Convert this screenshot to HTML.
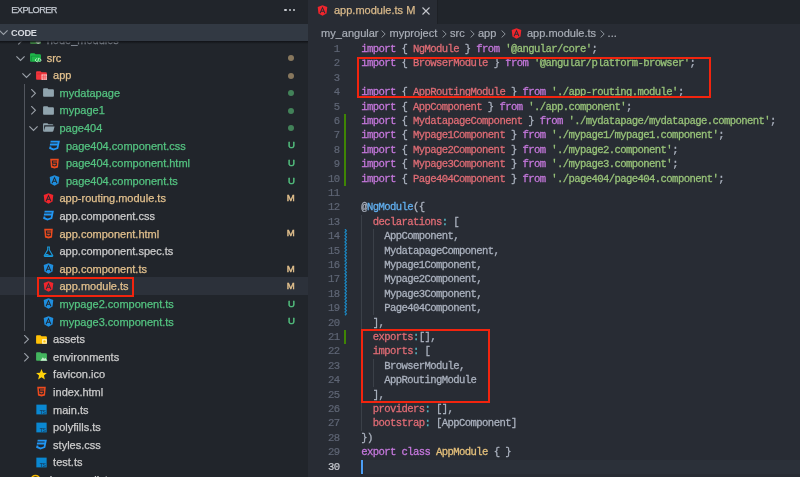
<!DOCTYPE html>
<html><head><meta charset="utf-8"><style>
*{margin:0;padding:0;box-sizing:border-box}
html,body{width:800px;height:477px;overflow:hidden;background:#282c34;font-family:"Liberation Sans",sans-serif}
.ic{position:absolute;display:block}
#sb{position:absolute;left:0;top:0;width:308px;height:477px;background:#21252b;overflow:hidden}
#sbtitle{position:absolute;left:11.3px;top:-1.8px;height:24px;line-height:24px;font-size:9.2px;letter-spacing:-0.55px;color:#c3c8d0;-webkit-text-stroke:0.25px #c3c8d0}
.dots{position:absolute;top:9.3px;width:2.2px;height:2.2px;border-radius:50%;background:#c9ccd2}
#list{position:absolute;left:0;top:41.4px;width:308px;height:440px;overflow:hidden}
#list .inner{position:absolute;left:0;top:-41.4px;width:308px;height:520px}
#hdr{position:absolute;left:0;top:24px;width:308px;height:17.4px;background:#323943}
#hdr .t{position:absolute;left:11.1px;top:0.6px;line-height:17.4px;font-size:9.2px;letter-spacing:-0.25px;font-weight:bold;color:#d7dae0}
#shadow{position:absolute;left:0;top:41.4px;width:308px;height:3px;background:linear-gradient(#101216,rgba(16,18,22,0))}
.fn{position:absolute;height:17.6px;line-height:17.6px;padding-top:0.4px;font-size:11px;white-space:pre;-webkit-text-stroke:0.25px currentColor}
.dc{position:absolute;right:13.2px;height:17.6px;line-height:17.6px;margin-top:-0.9px;font-size:9.6px;-webkit-text-stroke:0.45px currentColor}
.dot{position:absolute;left:288px;width:6px;height:6px;border-radius:50%}
.sel{position:absolute;left:0;width:308px;height:17.6px;margin-top:-0.6px;background:#2c313a}
.ig{position:absolute;width:1px;background:#52565e}
.redbox{position:absolute;border:2px solid #f2240e}
#tabs{position:absolute;left:308px;top:0;width:492px;height:24px;background:#21252b}
#tab{position:absolute;left:0;top:0;width:130px;height:24px;background:#282c34;border-right:1px solid #1d2025}
#tab .t{position:absolute;left:26px;top:-1px;line-height:22px;font-size:11px;color:#d9b98a;white-space:pre;-webkit-text-stroke:0.25px #d9b98a}
#bc{position:absolute;left:308px;top:24.8px;height:17.6px;line-height:17.6px;font-size:11px;color:#a9aeb7;white-space:pre;-webkit-text-stroke:0.2px #a9aeb7}
#bc span{position:absolute;top:0}
.ln{position:absolute;left:309px;width:30.5px;text-align:right;height:14.4px;line-height:14.4px;padding-top:0.2px;font-family:"Liberation Mono",monospace;font-size:10.6px;letter-spacing:-0.6px;color:#5f6675;-webkit-text-stroke:0.2px #5f6675}
.ln.act{color:#c9ccd2;-webkit-text-stroke:0.2px #c9ccd2}
.cl{position:absolute;left:361.2px;height:14.4px;line-height:14.4px;padding-top:0.2px;font-family:"Liberation Mono",monospace;font-size:10.6px;letter-spacing:-0.6px;white-space:pre;color:#abb2bf;-webkit-text-stroke:0.28px currentColor}
.k{color:#c678dd} .p{color:#abb2bf} .v{color:#e06c75} .s{color:#98c379} .f{color:#61afef} .o{color:#e5c07b} .c{color:#56b6c2}
.eg{position:absolute;width:1px;background:#3b4048}
.gadd{position:absolute;left:344px;width:2.4px;background:#3f8504}
.gmod{position:absolute;left:344px;width:3px;background:repeating-linear-gradient(-45deg,#1b81a8 0,#1b81a8 1.4px,#282c34 1.4px,#282c34 2.8px)}
.curline{position:absolute;left:363.5px;width:437px;height:14.4px;margin-top:0.4px;background:#2b3039}
.cursor{position:absolute;left:360.8px;width:2px;height:14.4px;margin-top:0.4px;background:#4c9ef5}
#root{position:absolute;left:0;top:0;width:800px;height:477px;will-change:transform}
</style></head><body><div id="root">
<div id="sb">
  <div id="sbtitle">EXPLORER</div>
  <div class="dots" style="left:284.4px"></div><div class="dots" style="left:288.6px"></div><div class="dots" style="left:292.6px"></div>
  <div id="list"><div class="inner">
  <svg class="ic" style="left:15.70px;top:35.90px" width="9" height="9" viewBox="0 0 9 9"><path d="M2.3 0.2 L6.4 4.3 L2.3 8.4" fill="none" stroke="#9aa0a8" stroke-width="1.15"/></svg><svg class="ic" style="left:29.00px;top:33.30px" width="13" height="13" viewBox="0 0 24 24"><path d="M10 4H4c-1.11 0-2 .89-2 2v12c0 1.097.903 2 2 2h16c1.097 0 2-.903 2-2V8a2 2 0 0 0-2-2h-8l-2-2z" fill="#4caf50"/><path d="M17 10l4.5 2.6v5.2L17 20.4l-4.5-2.6v-5.2z" fill="#c8e6c9"/></svg><div class="fn" style="left:46.70px;top:31.60px;color:#8c929c">node_modules</div><svg class="ic" style="left:15.70px;top:53.50px" width="9" height="9" viewBox="0 0 9 9"><path d="M0.4 2.4 L4.5 6.5 L8.6 2.4" fill="none" stroke="#9aa0a8" stroke-width="1.15"/></svg><svg class="ic" style="left:29.00px;top:50.90px" width="13" height="13" viewBox="0 0 24 24"><path d="M10 4H4c-1.11 0-2 .89-2 2v12c0 1.097.903 2 2 2h16c1.097 0 2-.903 2-2V8a2 2 0 0 0-2-2h-8l-2-2z" fill="#1fb84a"/><path d="M4.5 19V9.5h15" fill="none" stroke="#13823a" stroke-width="1.2"/><path d="M14.5 13.5l-3.2 3.3 3.2 3.3M19.5 13.5l3.2 3.3-3.2 3.3M18 12.8l-2 8" fill="none" stroke="#c2f2cc" stroke-width="1.7"/></svg><div class="fn" style="left:46.70px;top:49.20px;color:#e2c08d">src</div><div class="dot" style="top:55.00px;background:#87775d"></div><svg class="ic" style="left:22.10px;top:71.10px" width="9" height="9" viewBox="0 0 9 9"><path d="M0.4 2.4 L4.5 6.5 L8.6 2.4" fill="none" stroke="#9aa0a8" stroke-width="1.15"/></svg><svg class="ic" style="left:35.40px;top:68.50px" width="13" height="13" viewBox="0 0 24 24"><path d="M10 4H4c-1.11 0-2 .89-2 2v12c0 1.097.903 2 2 2h16c1.097 0 2-.903 2-2V8a2 2 0 0 0-2-2h-8l-2-2z" fill="#f2353c"/><path d="M4 9h8" stroke="#b8262b" stroke-width="1"/><rect x="12" y="10" width="10" height="10" fill="#fbe0e0"/><path d="M15.3 10v10M18.6 10v10M12 13.3h10M12 16.6h10" stroke="#f2353c" stroke-width="1.3"/></svg><div class="fn" style="left:53.10px;top:66.80px;color:#e2c08d">app</div><div class="dot" style="top:72.60px;background:#87775d"></div><svg class="ic" style="left:28.50px;top:88.70px" width="9" height="9" viewBox="0 0 9 9"><path d="M2.3 0.2 L6.4 4.3 L2.3 8.4" fill="none" stroke="#9aa0a8" stroke-width="1.15"/></svg><svg class="ic" style="left:41.80px;top:86.10px" width="13" height="13" viewBox="0 0 24 24"><path d="M10 4H4c-1.11 0-2 .89-2 2v12c0 1.097.903 2 2 2h16c1.097 0 2-.903 2-2V8a2 2 0 0 0-2-2h-8l-2-2z" fill="#90a4ae"/></svg><div class="fn" style="left:59.50px;top:84.40px;color:#54c380">mydatapage</div><div class="dot" style="top:90.20px;background:#428259"></div><svg class="ic" style="left:28.50px;top:106.30px" width="9" height="9" viewBox="0 0 9 9"><path d="M2.3 0.2 L6.4 4.3 L2.3 8.4" fill="none" stroke="#9aa0a8" stroke-width="1.15"/></svg><svg class="ic" style="left:41.80px;top:103.70px" width="13" height="13" viewBox="0 0 24 24"><path d="M10 4H4c-1.11 0-2 .89-2 2v12c0 1.097.903 2 2 2h16c1.097 0 2-.903 2-2V8a2 2 0 0 0-2-2h-8l-2-2z" fill="#90a4ae"/></svg><div class="fn" style="left:59.50px;top:102.00px;color:#54c380">mypage1</div><div class="dot" style="top:107.80px;background:#428259"></div><svg class="ic" style="left:28.50px;top:123.90px" width="9" height="9" viewBox="0 0 9 9"><path d="M0.4 2.4 L4.5 6.5 L8.6 2.4" fill="none" stroke="#9aa0a8" stroke-width="1.15"/></svg><svg class="ic" style="left:41.80px;top:121.30px" width="13" height="13" viewBox="0 0 24 24"><path d="M19 20H4a2 2 0 0 1-2-2V6c0-1.11.89-2 2-2h6l2 2h7a2 2 0 0 1 2 2H4v10l2.14-8h17.07l-2.28 8.5c-.23.87-1.01 1.5-1.93 1.5z" fill="#90a4ae"/></svg><div class="fn" style="left:59.50px;top:119.60px;color:#54c380">page404</div><div class="dot" style="top:125.40px;background:#428259"></div><svg class="ic" style="left:48.20px;top:138.90px" width="13" height="13" viewBox="0 0 24 24"><path d="M5 3l-.65 3.34h13.59L17.5 8.5H3.92l-.66 3.33h13.59l-.76 3.81-5.48 1.81-4.75-1.81.33-1.64H2.85l-.79 4 7.85 3 9.05-3 1.2-6.03.24-1.21L21.94 3H5z" fill="#2196f3"/></svg><div class="fn" style="left:65.90px;top:137.20px;color:#54c380">page404.component.css</div><div class="dc" style="top:137.20px;color:#54c380">U</div><svg class="ic" style="left:48.20px;top:156.50px" width="13" height="13" viewBox="0 0 24 24"><path d="M12 17.56l4.07-1.13.55-6.1H9.38L9.2 8.3h7.6l.2-1.99H7l.56 6.01h6.89l-.23 2.58-2.22.6-2.22-.6-.14-1.66h-2l.29 3.19L12 17.56M4.07 3h15.86L18.5 19.2 12 21l-6.5-1.8L4.07 3z" fill="#ee4b1e"/></svg><div class="fn" style="left:65.90px;top:154.80px;color:#54c380">page404.component.html</div><div class="dc" style="top:154.80px;color:#54c380">U</div><svg class="ic" style="left:48.20px;top:174.10px" width="13" height="13" viewBox="0 0 24 24"><path fill-rule="evenodd" d="M12 2.5L20.84 5.65L19.5 17.35L12 21.5L4.5 17.35L3.16 5.65L12 2.5M12 4.6L6.47 17H8.53L9.64 14.22H14.34L15.45 17H17.5L12 4.6M13.62 12.5H10.38L12 8.63L13.62 12.5Z" fill="#1f8ede"/></svg><div class="fn" style="left:65.90px;top:172.40px;color:#54c380">page404.component.ts</div><div class="dc" style="top:172.40px;color:#54c380">U</div><svg class="ic" style="left:41.80px;top:191.70px" width="13" height="13" viewBox="0 0 24 24"><path fill-rule="evenodd" d="M12 2.5L20.84 5.65L19.5 17.35L12 21.5L4.5 17.35L3.16 5.65L12 2.5M12 4.6L6.47 17H8.53L9.64 14.22H14.34L15.45 17H17.5L12 4.6M13.62 12.5H10.38L12 8.63L13.62 12.5Z" fill="#f0252c"/></svg><div class="fn" style="left:59.50px;top:190.00px;color:#e2c08d">app-routing.module.ts</div><div class="dc" style="top:190.00px;color:#e2c08d">M</div><svg class="ic" style="left:41.80px;top:209.30px" width="13" height="13" viewBox="0 0 24 24"><path d="M5 3l-.65 3.34h13.59L17.5 8.5H3.92l-.66 3.33h13.59l-.76 3.81-5.48 1.81-4.75-1.81.33-1.64H2.85l-.79 4 7.85 3 9.05-3 1.2-6.03.24-1.21L21.94 3H5z" fill="#2196f3"/></svg><div class="fn" style="left:59.50px;top:207.60px;color:#cccccc">app.component.css</div><svg class="ic" style="left:41.80px;top:226.90px" width="13" height="13" viewBox="0 0 24 24"><path d="M12 17.56l4.07-1.13.55-6.1H9.38L9.2 8.3h7.6l.2-1.99H7l.56 6.01h6.89l-.23 2.58-2.22.6-2.22-.6-.14-1.66h-2l.29 3.19L12 17.56M4.07 3h15.86L18.5 19.2 12 21l-6.5-1.8L4.07 3z" fill="#ee4b1e"/></svg><div class="fn" style="left:59.50px;top:225.20px;color:#e2c08d">app.component.html</div><div class="dc" style="top:225.20px;color:#e2c08d">M</div><svg class="ic" style="left:41.80px;top:244.50px" width="13" height="13" viewBox="0 0 24 24"><path d="M9.5 3.5h5M10.5 3.5v5.5L4.2 19.3c-.5.9.1 1.7 1 1.7h13.6c.9 0 1.5-.8 1-1.7L13.5 9V3.5" fill="none" stroke="#1a9de0" stroke-width="1.9" stroke-linejoin="round"/><path d="M6 17.5c2-1.5 4-1.5 6 0s4 1.5 6 0l1.2 2.3H4.8z" fill="#1a9de0"/></svg><div class="fn" style="left:59.50px;top:242.80px;color:#cccccc">app.component.spec.ts</div><svg class="ic" style="left:41.80px;top:262.10px" width="13" height="13" viewBox="0 0 24 24"><path fill-rule="evenodd" d="M12 2.5L20.84 5.65L19.5 17.35L12 21.5L4.5 17.35L3.16 5.65L12 2.5M12 4.6L6.47 17H8.53L9.64 14.22H14.34L15.45 17H17.5L12 4.6M13.62 12.5H10.38L12 8.63L13.62 12.5Z" fill="#1f8ede"/></svg><div class="fn" style="left:59.50px;top:260.40px;color:#e2c08d">app.component.ts</div><div class="dc" style="top:260.40px;color:#e2c08d">M</div><div class="sel" style="top:278.00px"></div><svg class="ic" style="left:41.80px;top:279.70px" width="13" height="13" viewBox="0 0 24 24"><path fill-rule="evenodd" d="M12 2.5L20.84 5.65L19.5 17.35L12 21.5L4.5 17.35L3.16 5.65L12 2.5M12 4.6L6.47 17H8.53L9.64 14.22H14.34L15.45 17H17.5L12 4.6M13.62 12.5H10.38L12 8.63L13.62 12.5Z" fill="#f0252c"/></svg><div class="fn" style="left:59.50px;top:278.00px;color:#e2c08d">app.module.ts</div><div class="dc" style="top:278.00px;color:#e2c08d">M</div><svg class="ic" style="left:41.80px;top:297.30px" width="13" height="13" viewBox="0 0 24 24"><path fill-rule="evenodd" d="M12 2.5L20.84 5.65L19.5 17.35L12 21.5L4.5 17.35L3.16 5.65L12 2.5M12 4.6L6.47 17H8.53L9.64 14.22H14.34L15.45 17H17.5L12 4.6M13.62 12.5H10.38L12 8.63L13.62 12.5Z" fill="#1f8ede"/></svg><div class="fn" style="left:59.50px;top:295.60px;color:#54c380">mypage2.component.ts</div><div class="dc" style="top:295.60px;color:#54c380">U</div><svg class="ic" style="left:41.80px;top:314.90px" width="13" height="13" viewBox="0 0 24 24"><path fill-rule="evenodd" d="M12 2.5L20.84 5.65L19.5 17.35L12 21.5L4.5 17.35L3.16 5.65L12 2.5M12 4.6L6.47 17H8.53L9.64 14.22H14.34L15.45 17H17.5L12 4.6M13.62 12.5H10.38L12 8.63L13.62 12.5Z" fill="#1f8ede"/></svg><div class="fn" style="left:59.50px;top:313.20px;color:#54c380">mypage3.component.ts</div><div class="dc" style="top:313.20px;color:#54c380">U</div><svg class="ic" style="left:22.10px;top:335.10px" width="9" height="9" viewBox="0 0 9 9"><path d="M2.3 0.2 L6.4 4.3 L2.3 8.4" fill="none" stroke="#9aa0a8" stroke-width="1.15"/></svg><svg class="ic" style="left:35.40px;top:332.50px" width="13" height="13" viewBox="0 0 24 24"><path d="M10 4H4c-1.11 0-2 .89-2 2v12c0 1.097.903 2 2 2h16c1.097 0 2-.903 2-2V8a2 2 0 0 0-2-2h-8l-2-2z" fill="#ffc107"/><rect x="13" y="11" width="9" height="9" rx="1" fill="#fff0b0"/><circle cx="17.5" cy="15.5" r="2.2" fill="#ffc107"/></svg><div class="fn" style="left:53.10px;top:330.80px;color:#cccccc">assets</div><svg class="ic" style="left:22.10px;top:352.70px" width="9" height="9" viewBox="0 0 9 9"><path d="M2.3 0.2 L6.4 4.3 L2.3 8.4" fill="none" stroke="#9aa0a8" stroke-width="1.15"/></svg><svg class="ic" style="left:35.40px;top:350.10px" width="13" height="13" viewBox="0 0 24 24"><path d="M10 4H4c-1.11 0-2 .89-2 2v12c0 1.097.903 2 2 2h16c1.097 0 2-.903 2-2V8a2 2 0 0 0-2-2h-8l-2-2z" fill="#43b55e"/><path d="M10 20l4.5-6.5 2.5 3 1.8-2 4.2 5.5z" fill="#c9efcf"/></svg><div class="fn" style="left:53.10px;top:348.40px;color:#cccccc">environments</div><svg class="ic" style="left:35.40px;top:367.70px" width="13" height="13" viewBox="0 0 24 24"><path d="M12 17.27L18.18 21l-1.64-7.03L22 9.24l-7.19-.62L12 2 9.19 8.62 2 9.24l5.45 4.73L5.82 21z" fill="#ffd20a"/></svg><div class="fn" style="left:53.10px;top:366.00px;color:#cccccc">favicon.ico</div><svg class="ic" style="left:35.40px;top:385.30px" width="13" height="13" viewBox="0 0 24 24"><path d="M12 17.56l4.07-1.13.55-6.1H9.38L9.2 8.3h7.6l.2-1.99H7l.56 6.01h6.89l-.23 2.58-2.22.6-2.22-.6-.14-1.66h-2l.29 3.19L12 17.56M4.07 3h15.86L18.5 19.2 12 21l-6.5-1.8L4.07 3z" fill="#ee4b1e"/></svg><div class="fn" style="left:53.10px;top:383.60px;color:#cccccc">index.html</div><svg class="ic" style="left:35.40px;top:402.90px" width="13" height="13" viewBox="0 0 24 24"><rect x="2.5" y="3" width="19" height="18" fill="#0a88d2"/><text x="8.6" y="20" font-family="Liberation Sans" font-weight="bold" font-size="9.5" letter-spacing="-0.5" fill="#16456a">TS</text></svg><div class="fn" style="left:53.10px;top:401.20px;color:#cccccc">main.ts</div><svg class="ic" style="left:35.40px;top:420.50px" width="13" height="13" viewBox="0 0 24 24"><rect x="2.5" y="3" width="19" height="18" fill="#0a88d2"/><text x="8.6" y="20" font-family="Liberation Sans" font-weight="bold" font-size="9.5" letter-spacing="-0.5" fill="#16456a">TS</text></svg><div class="fn" style="left:53.10px;top:418.80px;color:#cccccc">polyfills.ts</div><svg class="ic" style="left:35.40px;top:438.10px" width="13" height="13" viewBox="0 0 24 24"><path d="M5 3l-.65 3.34h13.59L17.5 8.5H3.92l-.66 3.33h13.59l-.76 3.81-5.48 1.81-4.75-1.81.33-1.64H2.85l-.79 4 7.85 3 9.05-3 1.2-6.03.24-1.21L21.94 3H5z" fill="#2196f3"/></svg><div class="fn" style="left:53.10px;top:436.40px;color:#cccccc">styles.css</div><svg class="ic" style="left:35.40px;top:455.70px" width="13" height="13" viewBox="0 0 24 24"><rect x="2.5" y="3" width="19" height="18" fill="#0a88d2"/><text x="8.6" y="20" font-family="Liberation Sans" font-weight="bold" font-size="9.5" letter-spacing="-0.5" fill="#16456a">TS</text></svg><div class="fn" style="left:53.10px;top:454.00px;color:#cccccc">test.ts</div><svg class="ic" style="left:29.00px;top:473.30px" width="13" height="13" viewBox="0 0 24 24"><circle cx="12" cy="12" r="7.5" fill="none" stroke="#f5b800" stroke-width="3"/></svg><div class="fn" style="left:46.70px;top:471.60px;color:#cccccc">.browserslistrc</div><div class="ig" style="left:24px;top:84.40px;height:246.40px"></div>
  </div></div>
  <div id="hdr"><svg class="ic" style="left:-1.00px;top:4.00px" width="9" height="9" viewBox="0 0 9 9"><path d="M0.4 2.4 L4.5 6.5 L8.6 2.4" fill="none" stroke="#9aa0a8" stroke-width="1.15"/></svg><div class="t">CODE</div></div>
  <div id="shadow"></div>
  <div class="redbox" style="left:36.7px;top:276.9px;width:97.4px;height:19.9px"></div>
</div>
<div id="tabs"><div id="tab"><svg class="ic" style="left:7.90px;top:4.30px" width="13" height="13" viewBox="0 0 24 24"><path fill-rule="evenodd" d="M12 2.5L20.84 5.65L19.5 17.35L12 21.5L4.5 17.35L3.16 5.65L12 2.5M12 4.6L6.47 17H8.53L9.64 14.22H14.34L15.45 17H17.5L12 4.6M13.62 12.5H10.38L12 8.63L13.62 12.5Z" fill="#f0252c"/></svg><div class="t">app.module.ts <span style="font-weight:normal">M</span></div>
<svg class="ic" style="left:113.8px;top:7px" width="8" height="8" viewBox="0 0 8 8"><path d="M0.5 0.5L7.5 7.5M7.5 0.5L0.5 7.5" stroke="#c5c8ce" stroke-width="1.1"/></svg></div></div>
<div id="bc">
<span style="left:13px">my_angular</span><span style="left:81.6px">myproject</span><span style="left:142px">src</span><span style="left:170px">app</span>
</div>
<svg class="ic" style="left:381.20px;top:30.2px" width="5" height="8" viewBox="0 0 5 8"><path d="M0.6 0.5L4.2 4L0.6 7.5" fill="none" stroke="#9aa0a8" stroke-width="0.9"/></svg><svg class="ic" style="left:442.20px;top:30.2px" width="5" height="8" viewBox="0 0 5 8"><path d="M0.6 0.5L4.2 4L0.6 7.5" fill="none" stroke="#9aa0a8" stroke-width="0.9"/></svg><svg class="ic" style="left:470.20px;top:30.2px" width="5" height="8" viewBox="0 0 5 8"><path d="M0.6 0.5L4.2 4L0.6 7.5" fill="none" stroke="#9aa0a8" stroke-width="0.9"/></svg><svg class="ic" style="left:501.20px;top:30.2px" width="5" height="8" viewBox="0 0 5 8"><path d="M0.6 0.5L4.2 4L0.6 7.5" fill="none" stroke="#9aa0a8" stroke-width="0.9"/></svg><svg class="ic" style="left:600.20px;top:30.2px" width="5" height="8" viewBox="0 0 5 8"><path d="M0.6 0.5L4.2 4L0.6 7.5" fill="none" stroke="#9aa0a8" stroke-width="0.9"/></svg>
<svg class="ic" style="left:509.50px;top:26.50px" width="13" height="13" viewBox="0 0 24 24"><path fill-rule="evenodd" d="M12 2.5L20.84 5.65L19.5 17.35L12 21.5L4.5 17.35L3.16 5.65L12 2.5M12 4.6L6.47 17H8.53L9.64 14.22H14.34L15.45 17H17.5L12 4.6M13.62 12.5H10.38L12 8.63L13.62 12.5Z" fill="#f0252c"/></svg>
<div id="bc2" style="position:absolute;left:527px;top:24.8px;height:17.6px;line-height:17.6px;font-size:11px;color:#a9aeb7;white-space:pre;-webkit-text-stroke:0.2px #a9aeb7">app.module.ts</div>
<div style="position:absolute;left:607.6px;top:24.8px;height:17.6px;line-height:17.6px;font-size:11px;color:#a9aeb7;-webkit-text-stroke:0.2px #a9aeb7">...</div>
<div class="ln" style="top:41.80px">1</div><div class="cl" style="top:41.80px"><span class="k">import</span><span class="p"> { </span><span class="v">NgModule</span><span class="p"> } </span><span class="k">from</span><span class="p"> </span><span class="s">&#x27;@angular/core&#x27;</span><span class="p">;</span></div><div class="ln" style="top:56.20px">2</div><div class="cl" style="top:56.20px"><span class="k">import</span><span class="p"> { </span><span class="v">BrowserModule</span><span class="p"> } </span><span class="k">from</span><span class="p"> </span><span class="s">&#x27;@angular/platform-browser&#x27;</span><span class="p">;</span></div><div class="ln" style="top:70.60px">3</div><div class="cl" style="top:70.60px"></div><div class="ln" style="top:85.00px">4</div><div class="cl" style="top:85.00px"><span class="k">import</span><span class="p"> { </span><span class="v">AppRoutingModule</span><span class="p"> } </span><span class="k">from</span><span class="p"> </span><span class="s">&#x27;./app-routing.module&#x27;</span><span class="p">;</span></div><div class="ln" style="top:99.40px">5</div><div class="cl" style="top:99.40px"><span class="k">import</span><span class="p"> { </span><span class="v">AppComponent</span><span class="p"> } </span><span class="k">from</span><span class="p"> </span><span class="s">&#x27;./app.component&#x27;</span><span class="p">;</span></div><div class="ln" style="top:113.80px">6</div><div class="cl" style="top:113.80px"><span class="k">import</span><span class="p"> { </span><span class="v">MydatapageComponent</span><span class="p"> } </span><span class="k">from</span><span class="p"> </span><span class="s">&#x27;./mydatapage/mydatapage.component&#x27;</span><span class="p">;</span></div><div class="ln" style="top:128.20px">7</div><div class="cl" style="top:128.20px"><span class="k">import</span><span class="p"> { </span><span class="v">Mypage1Component</span><span class="p"> } </span><span class="k">from</span><span class="p"> </span><span class="s">&#x27;./mypage1/mypage1.component&#x27;</span><span class="p">;</span></div><div class="ln" style="top:142.60px">8</div><div class="cl" style="top:142.60px"><span class="k">import</span><span class="p"> { </span><span class="v">Mypage2Component</span><span class="p"> } </span><span class="k">from</span><span class="p"> </span><span class="s">&#x27;./mypage2.component&#x27;</span><span class="p">;</span></div><div class="ln" style="top:157.00px">9</div><div class="cl" style="top:157.00px"><span class="k">import</span><span class="p"> { </span><span class="v">Mypage3Component</span><span class="p"> } </span><span class="k">from</span><span class="p"> </span><span class="s">&#x27;./mypage3.component&#x27;</span><span class="p">;</span></div><div class="ln" style="top:171.40px">10</div><div class="cl" style="top:171.40px"><span class="k">import</span><span class="p"> { </span><span class="v">Page404Component</span><span class="p"> } </span><span class="k">from</span><span class="p"> </span><span class="s">&#x27;./page404/page404.component&#x27;</span><span class="p">;</span></div><div class="ln" style="top:185.80px">11</div><div class="cl" style="top:185.80px"></div><div class="ln" style="top:200.20px">12</div><div class="cl" style="top:200.20px"><span class="p">@</span><span class="f">NgModule</span><span class="p">({</span></div><div class="ln" style="top:214.60px">13</div><div class="cl" style="top:214.60px"><span class="p">  </span><span class="v">declarations</span><span class="c">:</span><span class="p"> [</span></div><div class="ln" style="top:229.00px">14</div><div class="cl" style="top:229.00px"><span class="p">    AppComponent,</span></div><div class="ln" style="top:243.40px">15</div><div class="cl" style="top:243.40px"><span class="p">    MydatapageComponent,</span></div><div class="ln" style="top:257.80px">16</div><div class="cl" style="top:257.80px"><span class="p">    Mypage1Component,</span></div><div class="ln" style="top:272.20px">17</div><div class="cl" style="top:272.20px"><span class="p">    Mypage2Component,</span></div><div class="ln" style="top:286.60px">18</div><div class="cl" style="top:286.60px"><span class="p">    Mypage3Component,</span></div><div class="ln" style="top:301.00px">19</div><div class="cl" style="top:301.00px"><span class="p">    Page404Component,</span></div><div class="ln" style="top:315.40px">20</div><div class="cl" style="top:315.40px"><span class="p">  ],</span></div><div class="ln" style="top:329.80px">21</div><div class="cl" style="top:329.80px"><span class="p">  </span><span class="v">exports</span><span class="c">:</span><span class="p">[],</span></div><div class="ln" style="top:344.20px">22</div><div class="cl" style="top:344.20px"><span class="p">  </span><span class="v">imports</span><span class="c">:</span><span class="p"> [</span></div><div class="ln" style="top:358.60px">23</div><div class="cl" style="top:358.60px"><span class="p">    BrowserModule,</span></div><div class="ln" style="top:373.00px">24</div><div class="cl" style="top:373.00px"><span class="p">    AppRoutingModule</span></div><div class="ln" style="top:387.40px">25</div><div class="cl" style="top:387.40px"><span class="p">  ],</span></div><div class="ln" style="top:401.80px">26</div><div class="cl" style="top:401.80px"><span class="p">  </span><span class="v">providers</span><span class="c">:</span><span class="p"> [],</span></div><div class="ln" style="top:416.20px">27</div><div class="cl" style="top:416.20px"><span class="p">  </span><span class="v">bootstrap</span><span class="c">:</span><span class="p"> [AppComponent]</span></div><div class="ln" style="top:430.60px">28</div><div class="cl" style="top:430.60px"><span class="p">})</span></div><div class="ln" style="top:445.00px">29</div><div class="cl" style="top:445.00px"><span class="k">export</span><span class="p"> </span><span class="k">class</span><span class="p"> </span><span class="o">AppModule</span><span class="p"> { }</span></div><div class="curline" style="top:459.40px"></div><div class="ln act" style="top:459.40px">30</div><div class="cl" style="top:459.40px"></div><div class="eg" style="left:361.20px;top:214.60px;height:216.00px"></div><div class="eg" style="left:372.72px;top:229.00px;height:86.40px"></div><div class="eg" style="left:372.72px;top:358.60px;height:28.80px"></div><div class="gadd" style="top:113.80px;height:72.00px"></div><svg class="ic" style="left:344px;top:229.20px" width="3.4" height="86.40" viewBox="0 0 3.4 86.40"><polyline points="1.00,0.00 2.40,1.60 1.00,3.20 2.40,4.80 1.00,6.40 2.40,8.00 1.00,9.60 2.40,11.20 1.00,12.80 2.40,14.40 1.00,16.00 2.40,17.60 1.00,19.20 2.40,20.80 1.00,22.40 2.40,24.00 1.00,25.60 2.40,27.20 1.00,28.80 2.40,30.40 1.00,32.00 2.40,33.60 1.00,35.20 2.40,36.80 1.00,38.40 2.40,40.00 1.00,41.60 2.40,43.20 1.00,44.80 2.40,46.40 1.00,48.00 2.40,49.60 1.00,51.20 2.40,52.80 1.00,54.40 2.40,56.00 1.00,57.60 2.40,59.20 1.00,60.80 2.40,62.40 1.00,64.00 2.40,65.60 1.00,67.20 2.40,68.80 1.00,70.40 2.40,72.00 1.00,73.60 2.40,75.20 1.00,76.80 2.40,78.40 1.00,80.00 2.40,81.60 1.00,83.20 2.40,84.80 1.00,86.40" fill="none" stroke="#1b86c0" stroke-width="1.3"/></svg><div class="gadd" style="top:329.80px;height:14.40px"></div><div class="cursor" style="top:459.40px"></div>
<div class="redbox" style="left:357px;top:57px;width:353.5px;height:41.4px"></div>
<div class="redbox" style="left:360.7px;top:328.8px;width:129.4px;height:73.8px"></div>
</div></body></html>
